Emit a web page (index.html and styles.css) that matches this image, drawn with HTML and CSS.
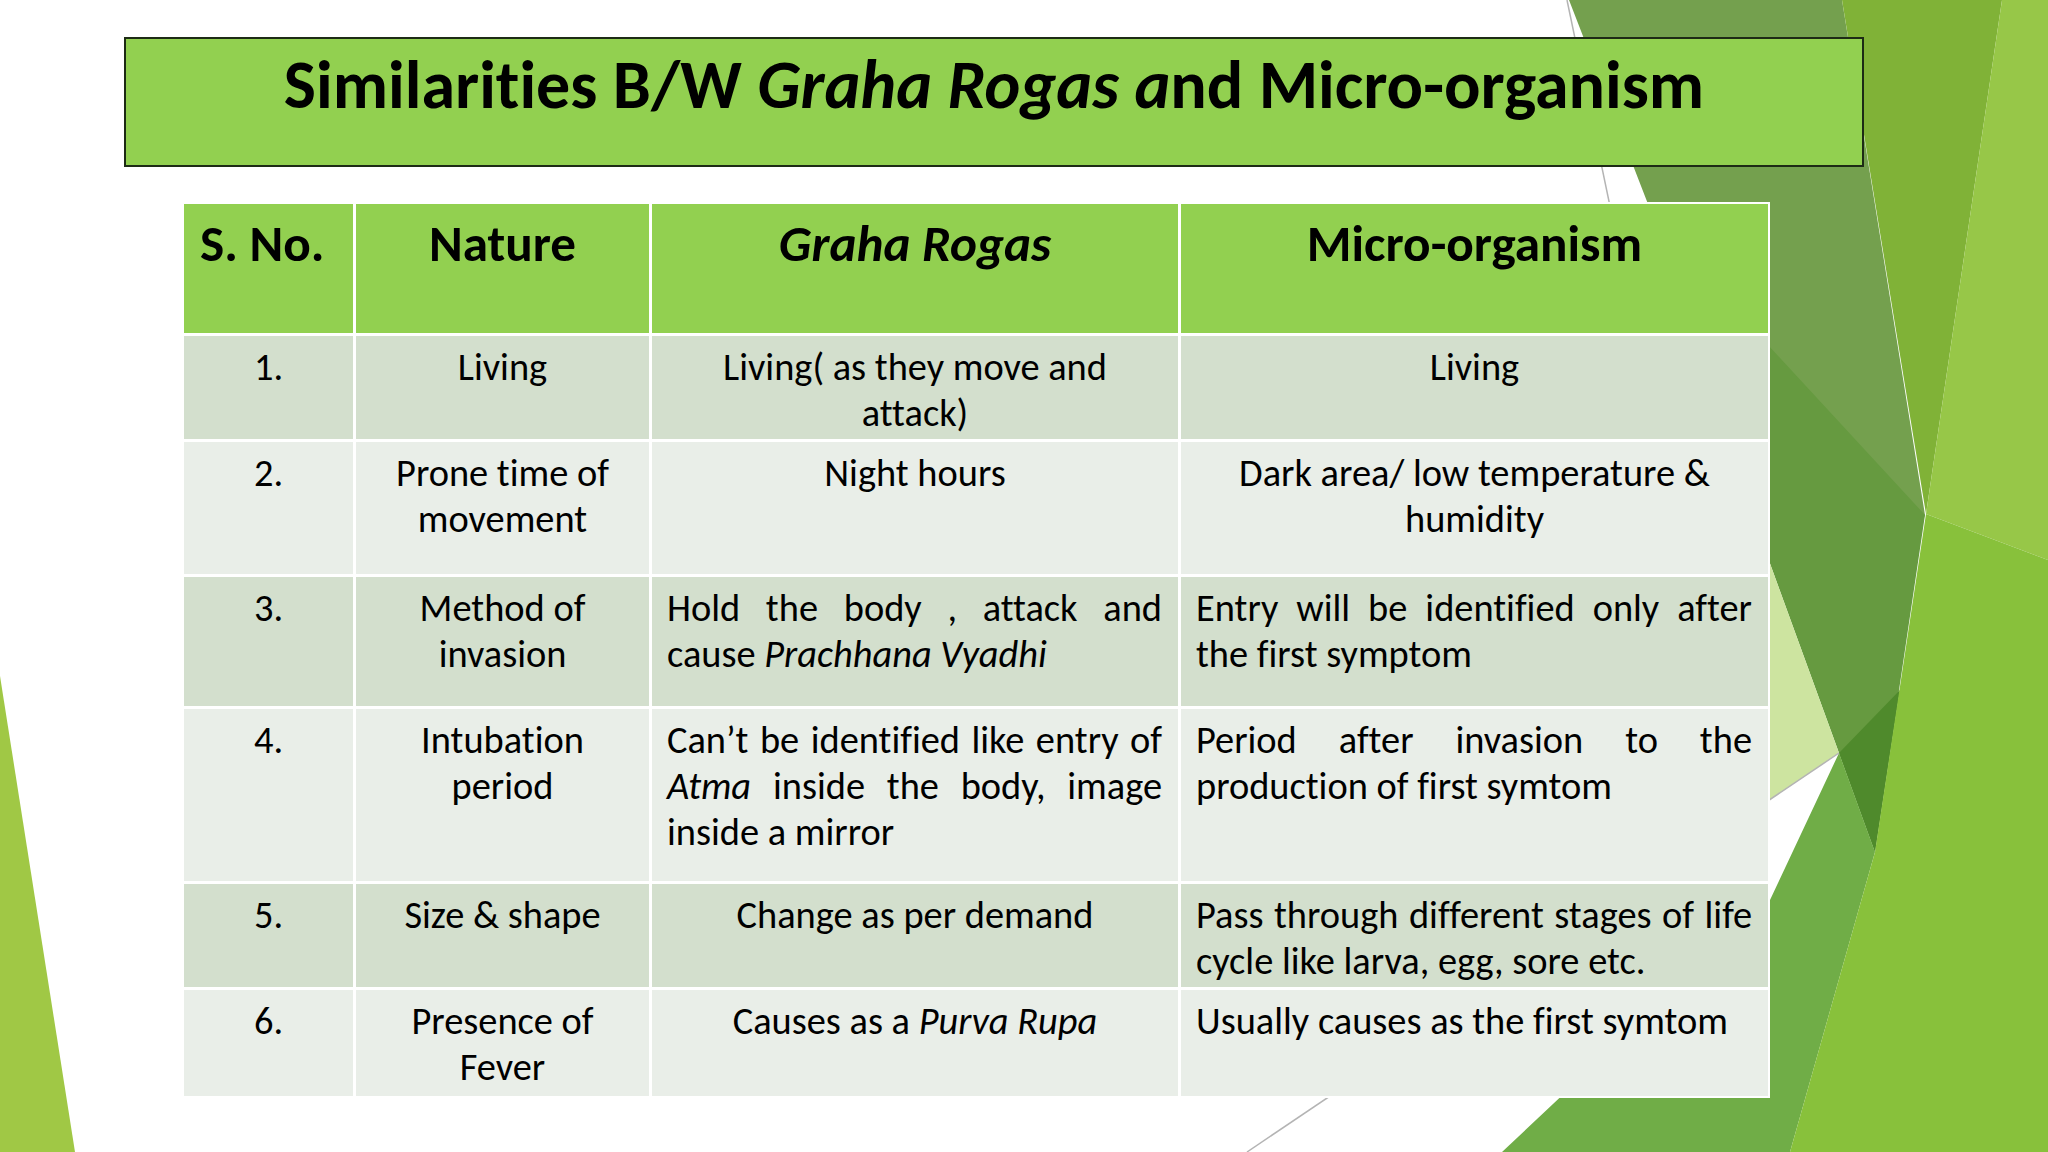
FILE: index.html
```html
<!DOCTYPE html>
<html>
<head>
<meta charset="utf-8">
<link rel="stylesheet" href="styles.css">
</head>
<body>
<div class="slide">
  <svg class="bg" width="2048" height="1152" viewBox="0 0 2048 1152">
    <polygon class="s-gray" points="1569,0 1842,0 1925,515 1840,753 1768,514"/>
    <polygon class="s-bright" points="1842,0 2002,0 1926,514"/>
    <polygon class="s-light" points="2002,0 2048,0 2048,560 1926,514"/>
    <polygon class="s-dark" points="1768,345 1925,515 1875,852 1839,753 1768,558"/>
    <polygon class="s-darkest" points="1839,753 1900,690 1875,852"/>
    <polygon class="s-pale" points="1768,558 1839,753 1768,801"/>
    <polygon class="s-mid" points="1502,1152 1770,900 1839,753 1875,852 1790,1152"/>
    <polygon class="s-green" points="1790,1152 1875,852 1926,514 2048,560 2048,1152"/>
    <polygon class="s-left" points="0,676 75,1152 0,1152"/>
    <line class="s-line" x1="1567" y1="0" x2="1640" y2="350"/>
    <line class="s-line" x1="1247" y1="1152" x2="1839" y2="753"/>
  </svg>
  <div class="content">
    <div class="title">Similarities B/W <i>Graha Rogas a</i>nd Micro-organism</div>
    <div class="grid">
      <div class="c h left">S. No.</div>
      <div class="c h">Nature</div>
      <div class="c h"><i>Graha Rogas</i></div>
      <div class="c h">Micro-organism</div>

      <div class="c odd">1.</div>
      <div class="c odd">Living</div>
      <div class="c odd">Living( as they move and<br>attack)</div>
      <div class="c odd">Living</div>

      <div class="c even">2.</div>
      <div class="c even">Prone time of<br>movement</div>
      <div class="c even">Night hours</div>
      <div class="c even">Dark area/ low temperature &amp;<br>humidity</div>

      <div class="c odd">3.</div>
      <div class="c odd">Method of<br>invasion</div>
      <div class="c odd just"><span class="jl">Hold the body , attack and</span><span>cause <i>Prachhana Vyadhi</i></span></div>
      <div class="c odd just"><span class="jl">Entry will be identified only after</span><span>the first symptom</span></div>

      <div class="c even">4.</div>
      <div class="c even">Intubation<br>period</div>
      <div class="c even just"><span class="jl">Can’t be identified like entry of</span><span class="jl"><i>Atma</i> inside the body, image</span><span>inside a mirror</span></div>
      <div class="c even just"><span class="jl">Period after invasion to the</span><span>production of first symtom</span></div>

      <div class="c odd">5.</div>
      <div class="c odd">Size &amp; shape</div>
      <div class="c odd">Change as per demand</div>
      <div class="c odd just"><span class="jl">Pass through different stages of life</span><span>cycle like larva, egg, sore etc.</span></div>

      <div class="c even">6.</div>
      <div class="c even">Presence of<br>Fever</div>
      <div class="c even">Causes as a <i>Purva Rupa</i></div>
      <div class="c even just"><span>Usually causes as the first symtom</span></div>
    </div>
  </div>
</div>
</body>
</html>
```
FILE: styles.css
```css
html, body {
  margin: 0;
  padding: 0;
  background: #ffffff;
}

.slide {
  position: relative;
  width: 2048px;
  height: 1152px;
  overflow: hidden;
  background: #ffffff;
  font-family: Carlito, Lato, "Liberation Sans", sans-serif;
  font-variant-ligatures: none;
  font-feature-settings: "liga" 0, "clig" 0;
  color: #000000;
}

.bg {
  position: absolute;
  left: 0;
  top: 0;
}

.s-gray { fill: #74a04e; }
.s-bright { fill: #80b237; }
.s-light { fill: #97c748; }
.s-dark { fill: #669a40; }
.s-darkest { fill: #4f8a2c; }
.s-pale { fill: #cde4a0; }
.s-mid { fill: #70ad47; }
.s-green { fill: #88c13b; }
.s-left { fill: #a0c845; }
.s-line { stroke: #b4b4b4; stroke-width: 1.5; }

.content {
  position: relative;
  padding: 37px 0 0 124px;
}

.title {
  box-sizing: border-box;
  width: 1740px;
  height: 130px;
  border: 2px solid #1d2b15;
  background: #92d050;
  text-align: center;
  font-weight: bold;
  font-size: 68px;
  line-height: 82px;
  padding-top: 5px;
}

.grid {
  display: grid;
  margin: 37px 0 0 60px;
  width: 1584px;
  grid-template-columns: 169px 293px 526px 587px;
  grid-template-rows: 129px 103px 132px 129px 172px 103px 106px;
  column-gap: 3px;
  row-gap: 3px;
  background: #ffffff;
  outline: 2px solid #ffffff;
}

.c {
  box-sizing: border-box;
  padding: 8px 16px 0 16px;
  font-size: 38.4px;
  line-height: 46px;
  text-align: center;
}

.h {
  background: #92d050;
  font-weight: bold;
  font-size: 51.2px;
  line-height: 62px;
  padding-top: 9px;
  border-bottom: 3px solid #ffffff;
  height: 132px;
}

.h.left { text-align: left; }

.odd { background: #d3dfcd; }
.even { background: #e9eee8; }

.just {
  text-align: justify;
  padding-left: 15px;
}

.just span {
  display: block;
  text-align: left;
}

.just span.jl {
  text-align: justify;
  text-align-last: justify;
}
```
